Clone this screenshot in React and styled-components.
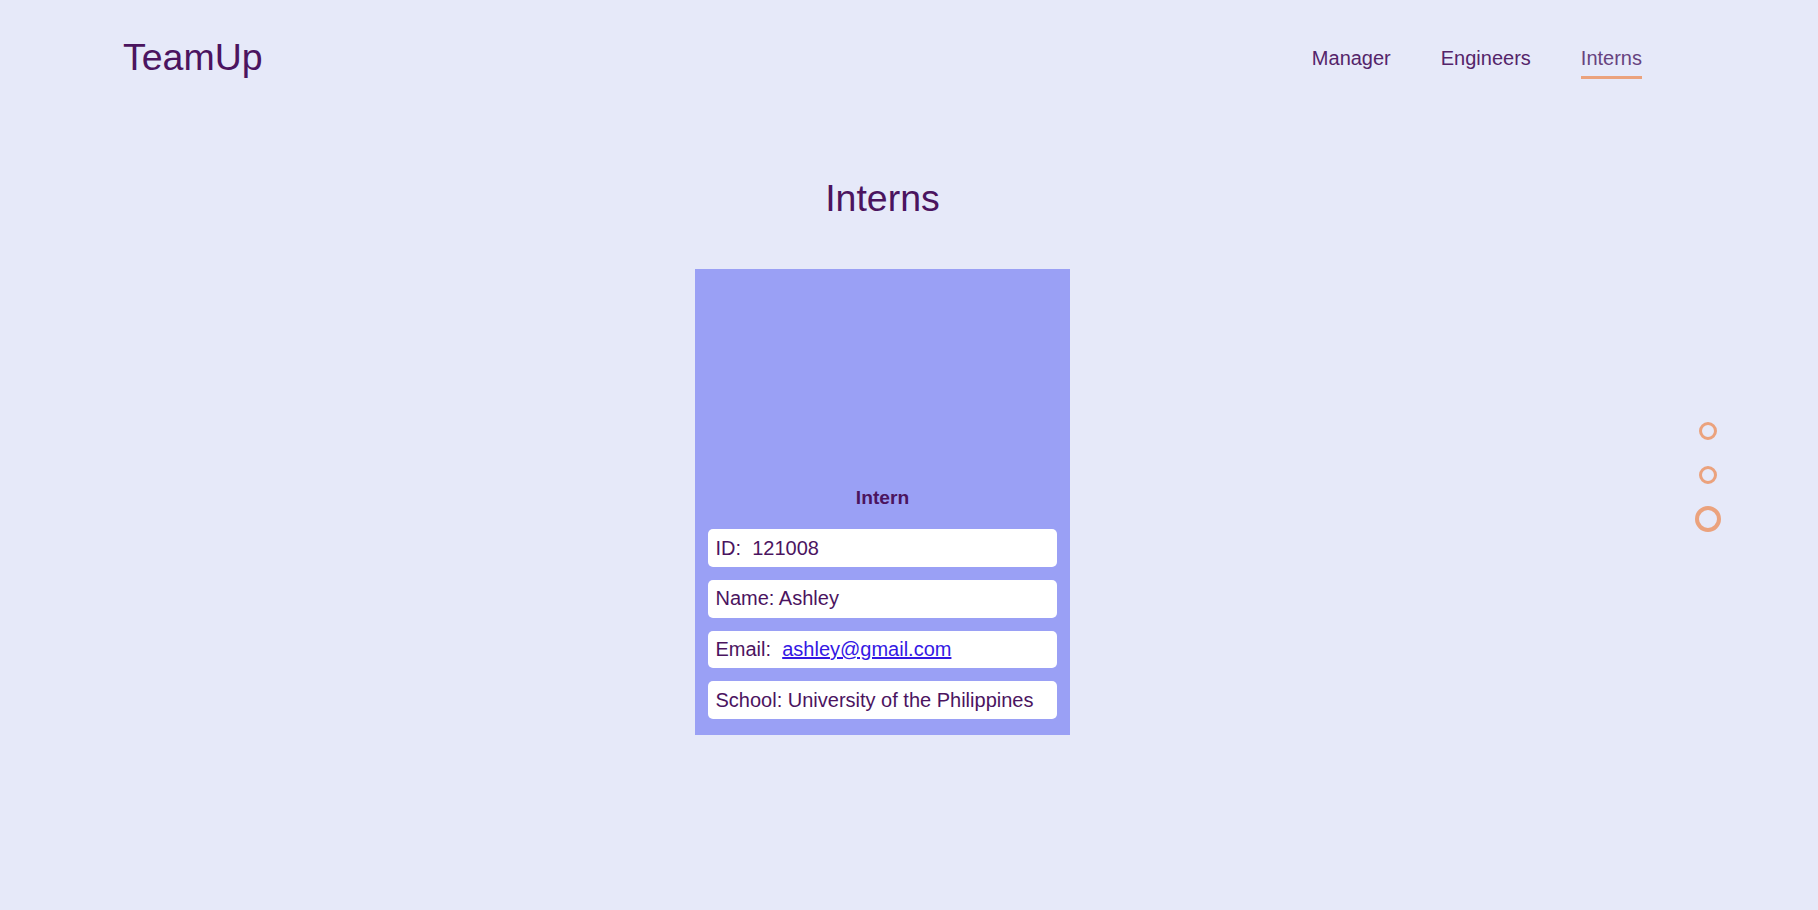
import React from "react";
import styled, { createGlobalStyle } from "styled-components";

const GlobalStyle = createGlobalStyle`
  html, body {
    margin: 0;
    padding: 0;
    background: #e6e9f9;
  }
  body {
    font-family: "Liberation Sans", Arial, sans-serif;
    color: #4b145f;
  }
  * { box-sizing: border-box; }
`;

const Page = styled.div`
  min-height: 910px;
  background: #e6e9f9;
`;

const Header = styled.header`
  display: flex;
  justify-content: space-between;
  align-items: flex-start;
  height: 114px;
  padding: 38.5px 176px 0 123px;
`;

const Logo = styled.div`
  font-size: 37.5px;
  line-height: 36px;
  color: #4b145f;
`;

const Nav = styled.nav`
  display: flex;
  gap: 50px;
  margin-top: 8.5px;
`;

const NavLink = styled.a`
  font-size: 20px;
  line-height: 23px;
  padding-bottom: 6px;
  border-bottom: 3px solid ${(p) => (p.$active ? "#eba27d" : "transparent")};
  color: ${(p) => (p.$active ? "#67437f" : "#54246a")};
  text-decoration: none;
  cursor: pointer;
`;

const Main = styled.main`
  display: flex;
  flex-direction: column;
  align-items: center;
  padding-right: 53px;
`;

const Title = styled.h2`
  margin: 62.6px 0 49px;
  font-size: 37.5px;
  line-height: 43px;
  font-weight: 400;
  color: #4b145f;
`;

const Card = styled.section`
  width: 375px;
  background: #9aa0f5;
  padding: 0 13px 16px;
  display: flex;
  flex-direction: column;
`;

const Photo = styled.div`
  height: 218.2px;
`;

const Role = styled.h3`
  margin: 0 0 20.5px;
  text-align: center;
  font-size: 19.2px;
  line-height: 22px;
  font-weight: 700;
  color: #4b145f;
`;

const Rows = styled.ul`
  list-style: none;
  margin: 0;
  padding: 0;
  display: flex;
  flex-direction: column;
  gap: 12.9px;
`;

const Row = styled.li`
  height: 37.8px;
  display: flex;
  align-items: center;
  padding-left: 7.5px;
  background: #ffffff;
  border-radius: 5px;
  font-size: 20px;
  color: #4b145f;
  white-space: pre;
`;

const Mail = styled.a`
  color: #3418e4;
  text-decoration: underline;
`;

const Dots = styled.nav`
  position: fixed;
  top: 408.7px;
  right: 96.7px;
  width: 26px;
  display: flex;
  flex-direction: column;
`;

const DotSlot = styled.div`
  height: 44px;
  display: flex;
  align-items: center;
  justify-content: center;
`;

const Dot = styled.span`
  display: block;
  width: ${(p) => (p.$big ? 26 : 18)}px;
  height: ${(p) => (p.$big ? 26 : 18)}px;
  border-radius: 50%;
  border: ${(p) => (p.$big ? 4 : 3)}px solid #eba27d;
`;

export default function App() {
  return (
    <Page>
      <GlobalStyle />
      <Header>
        <Logo>TeamUp</Logo>
        <Nav>
          <NavLink>Manager</NavLink>
          <NavLink>Engineers</NavLink>
          <NavLink $active>Interns</NavLink>
        </Nav>
      </Header>
      <Main>
        <Title>Interns</Title>
        <Card>
          <Photo />
          <Role>Intern</Role>
          <Rows>
            <Row>{"ID:  121008"}</Row>
            <Row>{"Name: Ashley"}</Row>
            <Row>
              {"Email:  "}
              <Mail href="mailto:ashley@gmail.com">ashley@gmail.com</Mail>
            </Row>
            <Row>{"School: University of the Philippines"}</Row>
          </Rows>
        </Card>
      </Main>
      <Dots>
        <DotSlot><Dot /></DotSlot>
        <DotSlot><Dot /></DotSlot>
        <DotSlot><Dot $big /></DotSlot>
      </Dots>
    </Page>
  );
}
